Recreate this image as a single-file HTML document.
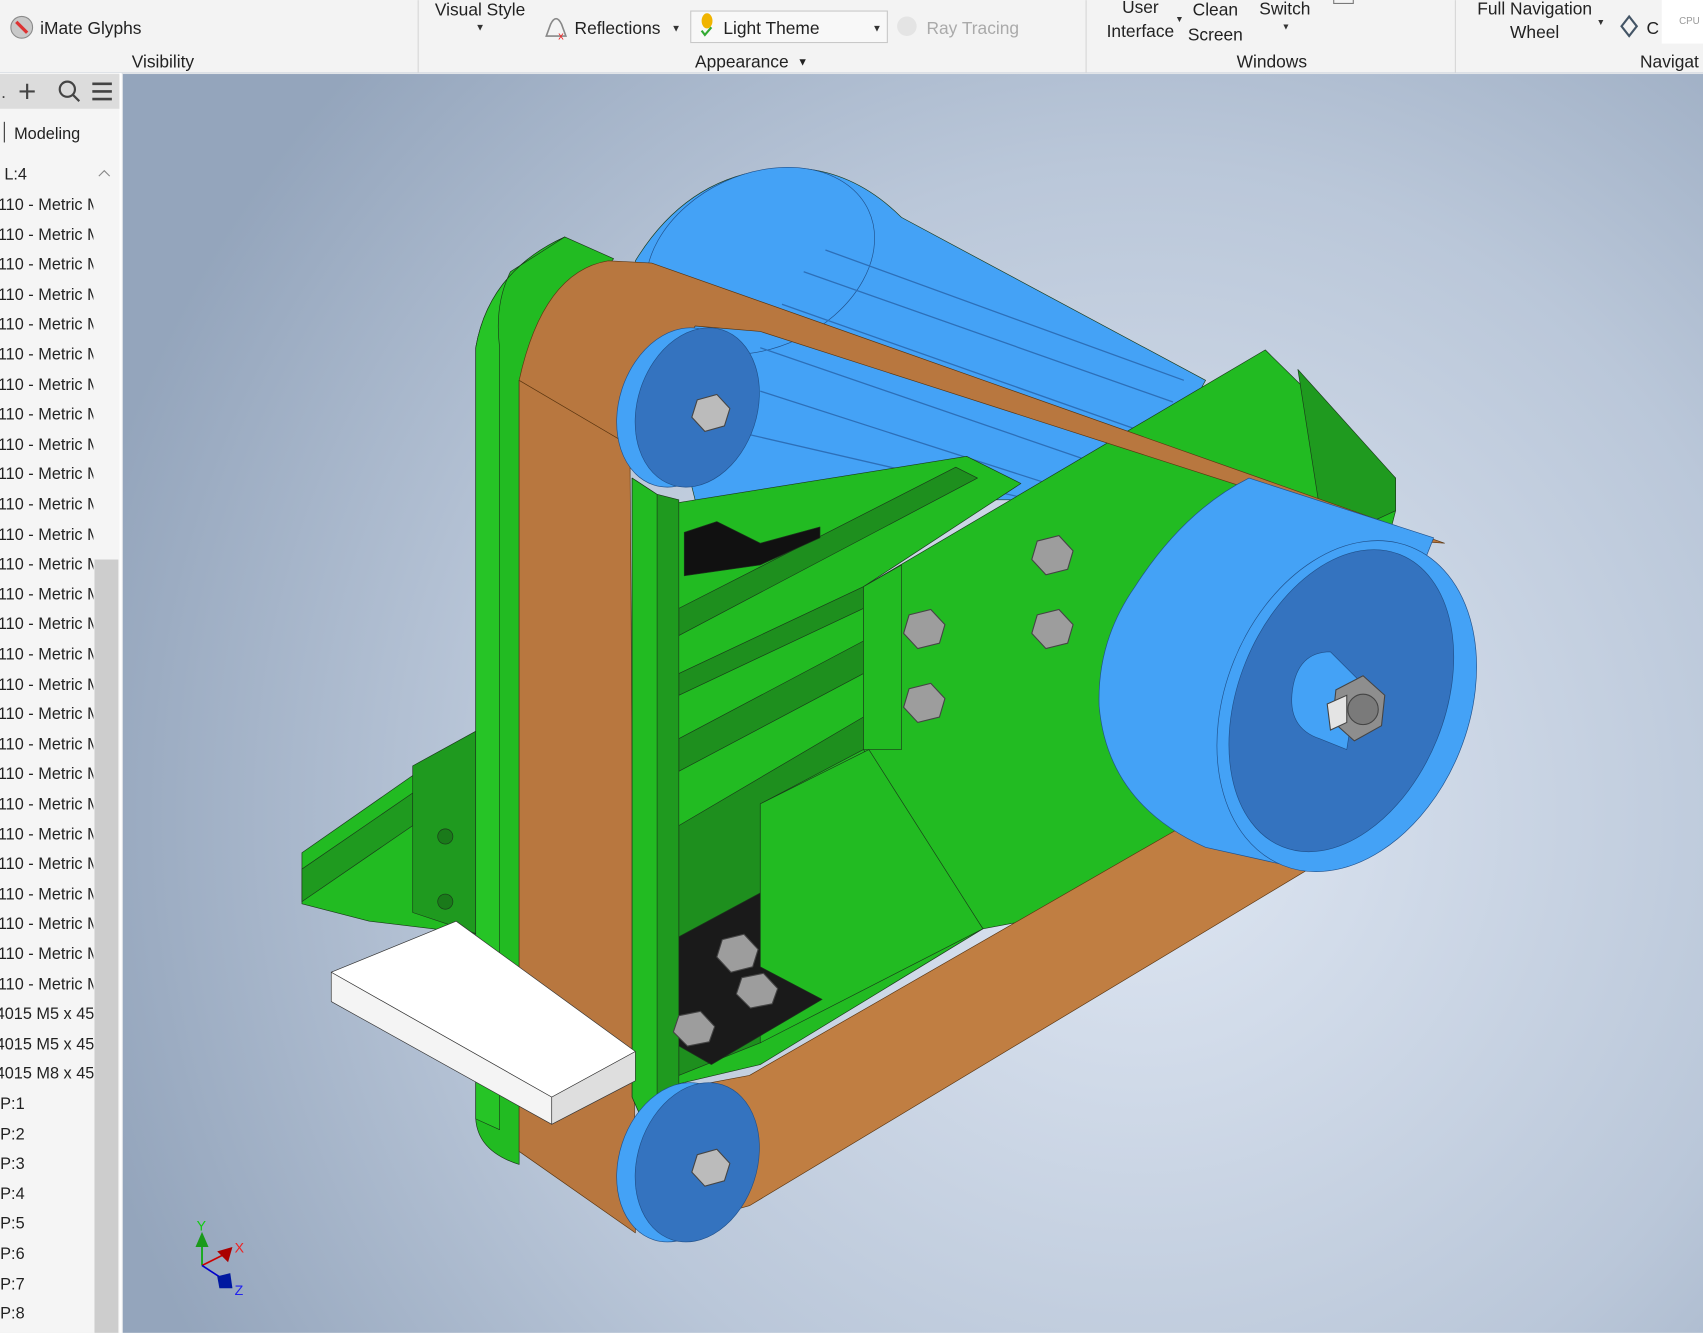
<!DOCTYPE html>
<html><head><meta charset="utf-8"><style>
html,body{margin:0;padding:0;width:1703px;height:1333px;overflow:hidden;background:#f3f3f3}
svg{display:block}
text{font-family:"Liberation Sans",sans-serif}
</style></head><body>
<svg width="1703" height="1333" viewBox="0 0 1568 1227" xmlns="http://www.w3.org/2000/svg">
<defs>
<radialGradient id="bg" cx="1050" cy="750" r="1000" gradientUnits="userSpaceOnUse">
<stop offset="0" stop-color="#dfe7f3"/><stop offset="0.6" stop-color="#bac7d9"/><stop offset="1" stop-color="#94a5bc"/>
</radialGradient>
<clipPath id="lc"><rect x="0" y="140" width="86" height="1090"/></clipPath>
</defs>
<!-- ribbon -->
<rect x="0" y="0" width="1568" height="67" fill="#f3f3f3"/>
<line x1="385" y1="0" x2="385" y2="67" stroke="#d6d6d6"/>
<line x1="1000" y1="0" x2="1000" y2="67" stroke="#d6d6d6"/>
<line x1="1340" y1="0" x2="1340" y2="67" stroke="#d6d6d6"/>
<line x1="0" y1="67" x2="1568" y2="67" stroke="#cfd5de"/>
<circle cx="20" cy="25" r="10" fill="#c9c9c9" stroke="#8a8a8a"/><line x1="15" y1="20" x2="25" y2="30" stroke="#d33" stroke-width="3"/>
<text x="37" y="31" font-size="16" fill="#222">iMate Glyphs</text>
<text x="150" y="62" font-size="16" fill="#222" text-anchor="middle">Visibility</text>
<text x="442" y="14" font-size="16" fill="#222" text-anchor="middle">Visual Style</text>
<text x="442" y="28" font-size="9" fill="#333" text-anchor="middle">▼</text>
<path d="M503 33 L507 22 Q512 12 517 22 L521 33 Z" fill="none" stroke="#888" stroke-width="1.5"/><text x="514" y="36" font-size="10" fill="#e22">x</text>
<text x="529" y="31" font-size="16" fill="#222">Reflections</text>
<text x="618" y="29" font-size="9" fill="#333">▼</text>
<rect x="636" y="10" width="181" height="29" fill="#f8f8f8" stroke="#c8c8c8"/>
<ellipse cx="651" cy="19" rx="5" ry="7" fill="#f0b400"/><path d="M646 28 l3 4 l6 -7" stroke="#3a3" stroke-width="2" fill="none"/>
<text x="666" y="31" font-size="16" fill="#222">Light Theme</text>
<text x="803" y="29" font-size="9" fill="#333">▼</text>
<circle cx="835" cy="24" r="9" fill="#e4e4e4"/>
<text x="853" y="31" font-size="16" fill="#aaa">Ray Tracing</text>
<text x="683" y="62" font-size="16" fill="#222" text-anchor="middle">Appearance</text>
<text x="734" y="60" font-size="10" fill="#222">▼</text>
<text x="1050" y="12" font-size="16" fill="#222" text-anchor="middle">User</text>
<text x="1050" y="34" font-size="16" fill="#222" text-anchor="middle">Interface</text>
<text x="1082" y="20" font-size="8" fill="#333">▼</text>
<text x="1119" y="14" font-size="16" fill="#222" text-anchor="middle">Clean</text>
<text x="1119" y="37" font-size="16" fill="#222" text-anchor="middle">Screen</text>
<text x="1183" y="13" font-size="16" fill="#222" text-anchor="middle">Switch</text>
<text x="1180" y="27" font-size="8" fill="#333">▼</text>
<rect x="1228" y="-6" width="18" height="9" fill="none" stroke="#777"/>
<text x="1171" y="62" font-size="16" fill="#222" text-anchor="middle">Windows</text>
<text x="1413" y="13" font-size="16" fill="#222" text-anchor="middle">Full Navigation</text>
<text x="1413" y="35" font-size="16" fill="#222" text-anchor="middle">Wheel</text>
<text x="1470" y="23" font-size="8" fill="#333">▼</text>
<path d="M1493 24 l7 -9 l7 9 l-7 9 z" fill="none" stroke="#456" stroke-width="2"/><text x="1516" y="31" font-size="16" fill="#222">C</text>
<rect x="1530" y="-2" width="40" height="42" fill="#fff"/><text x="1546" y="22" font-size="9" fill="#999">CPU</text>
<text x="1510" y="62" font-size="16" fill="#222">Navigat</text>
<!-- left panel -->
<rect x="0" y="67" width="112" height="1160" fill="#f5f5f5"/>
<rect x="0" y="68" width="110" height="32" fill="#dcdcdc"/>
<text x="1" y="90" font-size="16" fill="#444">.</text>
<path d="M18 84 h14 M25 77 v14" stroke="#444" stroke-width="2"/>
<circle cx="62" cy="82" r="7" fill="none" stroke="#444" stroke-width="2"/><line x1="67" y1="87" x2="73" y2="93" stroke="#444" stroke-width="2"/>
<path d="M85 77 h18 M85 84 h18 M85 91 h18" stroke="#444" stroke-width="2.4"/>
<line x1="4" y1="112" x2="4" y2="131" stroke="#333"/>
<text x="13" y="128" font-size="15" fill="#222">Modeling</text>
<text x="4" y="165" font-size="15" fill="#222">L:4</text>
<path d="M91 162 l5 -5 l5 5" stroke="#888" fill="none"/>
<rect x="87" y="515" width="22" height="712" fill="#cdcdcd"/>
<line x1="111" y1="67" x2="111" y2="1227" stroke="#fff" stroke-width="2"/>
<g font-size="15" fill="#222" clip-path="url(#lc)">
<text x="-2" y="193">110 - Metric M</text><text x="-2" y="221">110 - Metric M</text><text x="-2" y="248">110 - Metric M</text><text x="-2" y="276">110 - Metric M</text><text x="-2" y="303">110 - Metric M</text><text x="-2" y="331">110 - Metric M</text><text x="-2" y="359">110 - Metric M</text><text x="-2" y="386">110 - Metric M</text><text x="-2" y="414">110 - Metric M</text><text x="-2" y="441">110 - Metric M</text><text x="-2" y="469">110 - Metric M</text><text x="-2" y="497">110 - Metric M</text><text x="-2" y="524">110 - Metric M</text><text x="-2" y="552">110 - Metric M</text><text x="-2" y="579">110 - Metric M</text><text x="-2" y="607">110 - Metric M</text><text x="-2" y="635">110 - Metric M</text><text x="-2" y="662">110 - Metric M</text><text x="-2" y="690">110 - Metric M</text><text x="-2" y="717">110 - Metric M</text><text x="-2" y="745">110 - Metric M</text><text x="-2" y="773">110 - Metric M</text><text x="-2" y="800">110 - Metric M</text><text x="-2" y="828">110 - Metric M</text><text x="-2" y="855">110 - Metric M</text><text x="-2" y="883">110 - Metric M</text><text x="-2" y="911">110 - Metric M</text>
<text x="-4" y="938">4015 M5 x 45</text><text x="-4" y="966">4015 M5 x 45</text><text x="-4" y="993">4015 M8 x 45</text>
<text x="-4" y="1021">IP:1</text><text x="-4" y="1049">IP:2</text><text x="-4" y="1076">IP:3</text><text x="-4" y="1104">IP:4</text><text x="-4" y="1131">IP:5</text><text x="-4" y="1159">IP:6</text><text x="-4" y="1187">IP:7</text><text x="-4" y="1214">IP:8</text>
</g>
<!-- viewport -->
<rect x="113" y="68" width="1455" height="1159" fill="url(#bg)"/>
<g stroke="#1a3a1a" stroke-width="0.6" stroke-linejoin="round">
<!-- motor -->
<path d="M585 240 Q640 150 740 155 Q790 160 830 200 L1110 350 L1050 460 L640 460 Z" fill="#44a2f6"/>
<ellipse cx="700" cy="240" rx="110" ry="80" transform="rotate(-25 700 240)" fill="#44a2f6" stroke="#20508a"/>
<g stroke="#2d6fb8" fill="none" stroke-width="1.2">
<path d="M740 250 L1080 370"/><path d="M760 230 L1090 350"/><path d="M720 280 L1060 400"/><path d="M700 320 L1020 430"/><path d="M700 360 L980 450"/><path d="M690 400 L950 460"/></g>
<!-- back plate -->
<path d="M795 540 L1165 322 L1285 440 L1285 470 L1200 800 L905 855 L795 690 Z" fill="#22bb22"/>
<path d="M1195 340 L1285 440 L1285 470 L1220 500 Z" fill="#1f9a1f"/>
<!-- frame middle -->
<path d="M610 465 L890 420 L940 445 L795 540 L795 690 L905 855 L700 980 L615 1000 Z" fill="#22bb22"/>
<path d="M625 560 L880 430 L900 440 L625 585 Z" fill="#1e8f1e"/>
<path d="M625 620 L795 540 L795 560 L625 640 Z" fill="#1e8f1e"/>
<path d="M625 680 L795 590 L795 620 L625 710 Z" fill="#1e8f1e"/>
<path d="M625 760 L795 660 L795 690 L700 740 L700 960 L625 990 Z" fill="#1e8f1e"/>
<path d="M795 540 L830 520 L830 690 L795 690 Z" fill="#22bb22"/>
<path d="M700 740 L800 690 L905 855 L700 960 Z" fill="#22bb22"/>
<path d="M630 490 L660 480 L700 500 L755 485 L755 495 L700 520 L630 530 Z" fill="#111"/>
<!-- extrusion left -->
<path d="M278 785 L440 672 L440 860 L340 848 L278 832 Z" fill="#22bb22"/>
<path d="M278 800 L380 730 L380 760 L278 830 Z" fill="#1f9a1f"/>
<path d="M380 705 L440 672 L440 860 L380 840 Z" fill="#1f9a1f"/>
<circle cx="410" cy="770" r="7" fill="#1a7a1a"/><circle cx="410" cy="830" r="7" fill="#1a7a1a"/>
<!-- left vertical arm -->
<path d="M438 320 Q450 250 520 218 L565 238 L478 350 L478 1072 Q440 1060 438 1030 Z" fill="#22bb22"/>
<path d="M438 320 Q450 250 520 218 L470 250 Q455 280 460 320 L460 1040 L438 1030 Z" fill="#26c426"/>
<!-- belt -->
<path d="M478 350 L580 410 L585 1135 L478 1060 Z" fill="#b8773f" stroke="#5a3510"/>
<path d="M478 350 Q500 250 560 240 L600 242 L1330 500 L1300 498 L700 305 L640 300 L580 410 Z" fill="#b8773f" stroke="#5a3510"/>
<path d="M600 1135 L690 1110 L1205 800 L1090 760 L690 990 L610 1005 Z" fill="#c07e42" stroke="#5a3510"/>
<!-- black bracket -->
<path d="M620 865 L700 822 L700 890 L757 920 L655 980 L620 960 Z" fill="#1a1a1a"/>
<!-- front green strip -->
<path d="M582 440 L605 455 L625 460 L625 1020 L590 1028 L582 1010 Z" fill="#1f9a1f"/>
<path d="M582 440 L605 455 L605 1025 L590 1028 L582 1010 Z" fill="#22bb22"/>
<!-- white plate -->
<path d="M305 895 L420 848 L585 968 L508 1010 Z" fill="#ffffff" stroke="#333"/>
<path d="M305 895 L508 1010 L508 1035 L305 922 Z" fill="#f4f4f4" stroke="#333"/>
<path d="M508 1010 L585 968 L585 995 L508 1035 Z" fill="#dedede" stroke="#333"/>
<!-- top-left pulley -->
<ellipse cx="625" cy="375" rx="55" ry="75" transform="rotate(18 625 375)" fill="#44a2f6" stroke="#20508a"/>
<ellipse cx="642" cy="375" rx="55" ry="75" transform="rotate(18 642 375)" fill="#3473bf" stroke="#20508a"/>
<!-- bottom pulley -->
<ellipse cx="625" cy="1070" rx="55" ry="75" transform="rotate(18 625 1070)" fill="#44a2f6" stroke="#20508a"/>
<ellipse cx="642" cy="1070" rx="55" ry="75" transform="rotate(18 642 1070)" fill="#3473bf" stroke="#20508a"/>
<!-- right pulley -->
<path d="M1045 540 Q1090 470 1150 440 L1320 495 L1200 800 L1110 780 Q1020 740 1012 650 Q1010 590 1045 540 Z" fill="#44a2f6" stroke="#20508a"/>
<ellipse cx="1240" cy="650" rx="112" ry="158" transform="rotate(22 1240 650)" fill="#44a2f6" stroke="#20508a"/>
<ellipse cx="1235" cy="645" rx="95" ry="145" transform="rotate(22 1235 645)" fill="#3473bf" stroke="#20508a"/>
<path d="M1190 635 Q1195 600 1225 600 L1250 625 L1240 690 L1215 680 Q1185 670 1190 635 Z" fill="#44a2f6" stroke="#20508a"/>
</g>
<!-- bolts -->
<g stroke="#444" stroke-width="1" fill="#9d9d9d">
<polygon points="955,498 975,493 988,507 983,524 963,529 950,515"/>
<polygon points="837,566 857,561 870,575 865,592 845,597 832,583"/>
<polygon points="955,566 975,561 988,575 983,592 963,597 950,583"/>
<polygon points="837,634 857,629 870,643 865,660 845,665 832,651"/>
<polygon points="642,368 660,363 672,376 667,392 649,397 637,384" fill="#bbb"/>
<polygon points="642,1063 660,1058 672,1071 667,1087 649,1092 637,1079" fill="#bbb"/>
<polygon points="665,865 685,860 698,874 693,890 673,895 660,881"/>
<polygon points="683,900 703,896 716,910 711,924 691,928 678,915"/>
<polygon points="625,935 645,931 658,945 653,959 633,963 620,950"/>
<polygon points="1230,635 1255,622 1275,640 1272,668 1247,682 1227,664" fill="#8e8e8e"/>
<circle cx="1255" cy="653" r="14" fill="#7a7a7a"/>
<polygon points="1222,648 1240,640 1240,665 1225,672" fill="#e4e4e4"/>
</g>
<!-- triad -->
<line x1="186" y1="1165" x2="186" y2="1140" stroke="#0a0" stroke-width="1.5"/>
<polygon points="180,1148 186,1134 192,1148" fill="#1a9a1a"/>
<line x1="186" y1="1165" x2="206" y2="1155" stroke="#c00" stroke-width="1.5"/>
<polygon points="200,1152 214,1148 210,1162" fill="#a00"/>
<line x1="186" y1="1165" x2="206" y2="1178" stroke="#00c" stroke-width="1.5"/>
<polygon points="200,1175 212,1172 214,1186 202,1186" fill="#0018a0"/>
<text x="181" y="1133" font-size="13" fill="#1c1">Y</text>
<text x="216" y="1153" font-size="13" fill="#e22">X</text>
<text x="216" y="1192" font-size="13" fill="#22e">Z</text>
</svg>
</body></html>
